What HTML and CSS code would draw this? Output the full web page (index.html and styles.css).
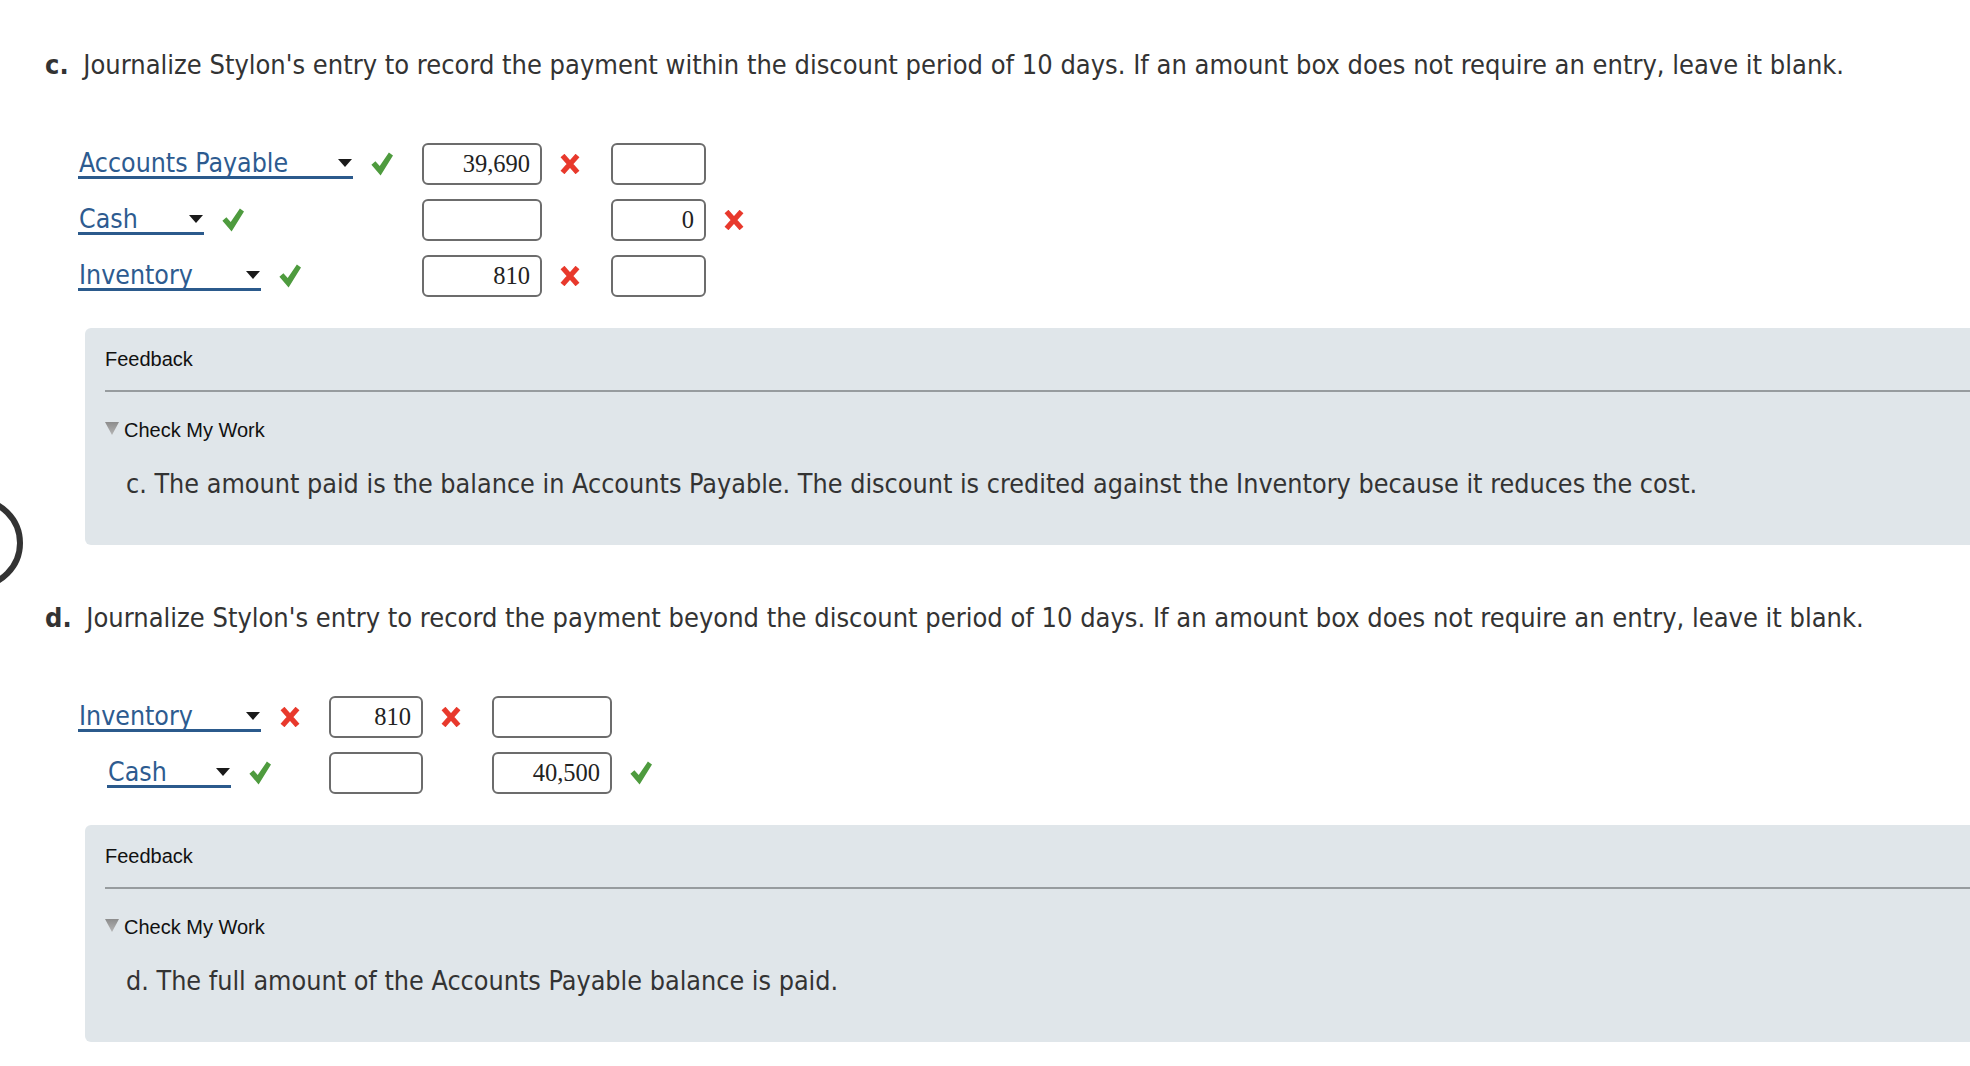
FILE: index.html
```html
<!DOCTYPE html>
<html lang="en">
<head>
<meta charset="utf-8">
<title>Journal entries</title>
<link rel="stylesheet" href="styles.css">
</head>
<body>
<div class="knob"></div>
<main class="page">
  <p class="prompt prompt-c"><b>c.</b> Journalize Stylon's entry to record the payment within the discount period of 10 days. If an amount box does not require an entry, leave it blank.</p>

  <div class="journal">
    <div class="acct">
      <div class="select w-ap"><span>Accounts Payable</span><svg class="caret" viewBox="0 0 14 8"><path d="M0 0H14L7 8Z"/></svg></div>
      <svg class="mark check" viewBox="0 0 22 24"><path d="M0.4 12.8 L4.4 9.2 L8.7 14 L17.9 0.6 L22 3.6 L9.6 23.4 Z"/></svg>
    </div>
    <div class="amt-cell"><div class="amount w-118">39,690</div><svg class="mark cross" viewBox="0 0 20 20"><path d="M2.5 1.5 L17.5 18.5 M17.5 1.5 L2.5 18.5"/></svg></div>
    <div class="amt-cell"><div class="amount w-95"></div></div>

    <div class="acct">
      <div class="select w-cash"><span>Cash</span><svg class="caret" viewBox="0 0 14 8"><path d="M0 0H14L7 8Z"/></svg></div>
      <svg class="mark check" viewBox="0 0 22 24"><path d="M0.4 12.8 L4.4 9.2 L8.7 14 L17.9 0.6 L22 3.6 L9.6 23.4 Z"/></svg>
    </div>
    <div class="amt-cell"><div class="amount w-118"></div></div>
    <div class="amt-cell"><div class="amount w-95">0</div><svg class="mark cross" viewBox="0 0 20 20"><path d="M2.5 1.5 L17.5 18.5 M17.5 1.5 L2.5 18.5"/></svg></div>

    <div class="acct">
      <div class="select w-inv"><span>Inventory</span><svg class="caret" viewBox="0 0 14 8"><path d="M0 0H14L7 8Z"/></svg></div>
      <svg class="mark check" viewBox="0 0 22 24"><path d="M0.4 12.8 L4.4 9.2 L8.7 14 L17.9 0.6 L22 3.6 L9.6 23.4 Z"/></svg>
    </div>
    <div class="amt-cell"><div class="amount w-118">810</div><svg class="mark cross" viewBox="0 0 20 20"><path d="M2.5 1.5 L17.5 18.5 M17.5 1.5 L2.5 18.5"/></svg></div>
    <div class="amt-cell"><div class="amount w-95"></div></div>
  </div>

  <section class="feedback">
    <div class="fb-title">Feedback</div>
    <div class="fb-toggle"><svg class="tri" viewBox="0 0 14 13"><defs><linearGradient id="g1" x1="0" y1="0" x2="0" y2="1"><stop offset="0" stop-color="#8c8c8c"/><stop offset="1" stop-color="#b5b5b5"/></linearGradient></defs><path d="M0 0H14L7 13Z" fill="url(#g1)"/></svg><span>Check My Work</span></div>
    <p class="fb-text">c. The amount paid is the balance in Accounts Payable. The discount is credited against the Inventory because it reduces the cost.</p>
  </section>

  <p class="prompt prompt-d"><b>d.</b> Journalize Stylon's entry to record the payment beyond the discount period of 10 days. If an amount box does not require an entry, leave it blank.</p>

  <div class="journal">
    <div class="acct">
      <div class="select w-inv"><span>Inventory</span><svg class="caret" viewBox="0 0 14 8"><path d="M0 0H14L7 8Z"/></svg></div>
      <svg class="mark cross wide" viewBox="0 0 20 20"><path d="M2.5 1.5 L17.5 18.5 M17.5 1.5 L2.5 18.5"/></svg>
    </div>
    <div class="amt-cell"><div class="amount w-94">810</div><svg class="mark cross" viewBox="0 0 20 20"><path d="M2.5 1.5 L17.5 18.5 M17.5 1.5 L2.5 18.5"/></svg></div>
    <div class="amt-cell"><div class="amount w-118"></div></div>

    <div class="acct credit">
      <div class="select w-cash2"><span>Cash</span><svg class="caret" viewBox="0 0 14 8"><path d="M0 0H14L7 8Z"/></svg></div>
      <svg class="mark check" viewBox="0 0 22 24"><path d="M0.4 12.8 L4.4 9.2 L8.7 14 L17.9 0.6 L22 3.6 L9.6 23.4 Z"/></svg>
    </div>
    <div class="amt-cell"><div class="amount w-94"></div></div>
    <div class="amt-cell"><div class="amount w-118">40,500</div><svg class="mark check" viewBox="0 0 22 24"><path d="M0.4 12.8 L4.4 9.2 L8.7 14 L17.9 0.6 L22 3.6 L9.6 23.4 Z"/></svg></div>
  </div>

  <section class="feedback">
    <div class="fb-title">Feedback</div>
    <div class="fb-toggle"><svg class="tri" viewBox="0 0 14 13"><defs><linearGradient id="g2" x1="0" y1="0" x2="0" y2="1"><stop offset="0" stop-color="#8c8c8c"/><stop offset="1" stop-color="#b5b5b5"/></linearGradient></defs><path d="M0 0H14L7 13Z" fill="url(#g2)"/></svg><span>Check My Work</span></div>
    <p class="fb-text">d. The full amount of the Accounts Payable balance is paid.</p>
  </section>
</main>
</body>
</html>
```

FILE: styles.css
```css
html, body {
  margin: 0;
  padding: 0;
  background: #ffffff;
  overflow: hidden;
}

body {
  font-family: "DejaVu Sans Condensed", "DejaVu Sans", sans-serif;
  font-stretch: condensed;
  color: #333333;
  position: relative;
  min-height: 1066px;
}

.knob {
  position: absolute;
  left: -69px;
  top: 497px;
  width: 92px;
  height: 92px;
  box-sizing: border-box;
  border: 6px solid #333333;
  border-radius: 50%;
}

.page {
  display: flex;
  flex-direction: column;
  align-items: flex-start;
}

.prompt {
  margin: 0 0 0 45px;
  font-size: 27px;
  line-height: 30px;
  white-space: nowrap;
}

.prompt b {
  font-weight: bold;
  margin-right: 7px;
}

.prompt-c { margin-top: 50px; }
.prompt-d { margin-top: 58px; }

.journal {
  margin: 63px 0 0 78px;
  display: grid;
  grid-template-columns: max-content max-content max-content;
  column-gap: 29px;
  row-gap: 14px;
}

.acct, .amt-cell {
  display: flex;
  align-items: center;
  height: 42px;
}

.acct.credit { padding-left: 29px; }

.select {
  box-sizing: border-box;
  height: 29px;
  background: #ffffff;
  border-radius: 5px 5px 0 0;
  border-bottom: 3px solid #2b5a8c;
  display: flex;
  align-items: center;
  justify-content: space-between;
  padding: 0 1px 0 1px;
  color: #2d5b90;
  font-size: 26.5px;
  line-height: 26px;
}

.select span { margin-top: 1px; }

.caret {
  width: 14px;
  height: 8px;
  fill: #1a1a1a;
  flex: none;
}

.w-ap { width: 275px; }
.w-cash { width: 126px; }
.w-inv { width: 183px; }
.w-cash2 { width: 124px; }

.mark {
  flex: none;
  margin-left: 18px;
}

.mark.wide { margin-left: 19px; }

.amt-cell .mark { margin-right: 2px; }

.check {
  width: 22px;
  height: 24px;
  fill: #4e9b3e;
}

.cross {
  width: 20px;
  height: 20px;
  fill: none;
  stroke: #e8392c;
  stroke-width: 5.2;
  stroke-linecap: butt;
}

.amount {
  box-sizing: border-box;
  height: 42px;
  border: 2px solid #6c6c6c;
  border-radius: 6px;
  background: #ffffff;
  font-family: "Liberation Serif", "Times New Roman", serif;
  font-stretch: normal;
  font-size: 24.5px;
  color: #222222;
  text-align: right;
  padding: 0 10px 0 4px;
  line-height: 38px;
}

.w-118 { width: 120px; }
.w-95 { width: 95px; }
.w-94 { width: 94px; }

.feedback {
  align-self: stretch;
  margin: 31px -30px 0 85px;
  background: #e0e6ea;
  border-radius: 6px;
  padding: 20px 0 46px 20px;
}

.fb-title,
.fb-toggle {
  font-family: "Liberation Sans", Arial, sans-serif;
  font-stretch: normal;
  font-size: 20px;
  line-height: 22px;
  color: #111111;
}

.fb-title {
  padding-bottom: 20px;
  border-bottom: 2px solid #979c9f;
}

.fb-toggle {
  margin-top: 27px;
  display: flex;
  align-items: center;
}

.tri {
  width: 14px;
  height: 13px;
  margin-right: 5px;
  margin-top: -4px;
}

.fb-text {
  margin: 28px 0 0 21px;
  font-size: 26.7px;
  line-height: 30px;
  color: #333333;
  white-space: nowrap;
}
```
